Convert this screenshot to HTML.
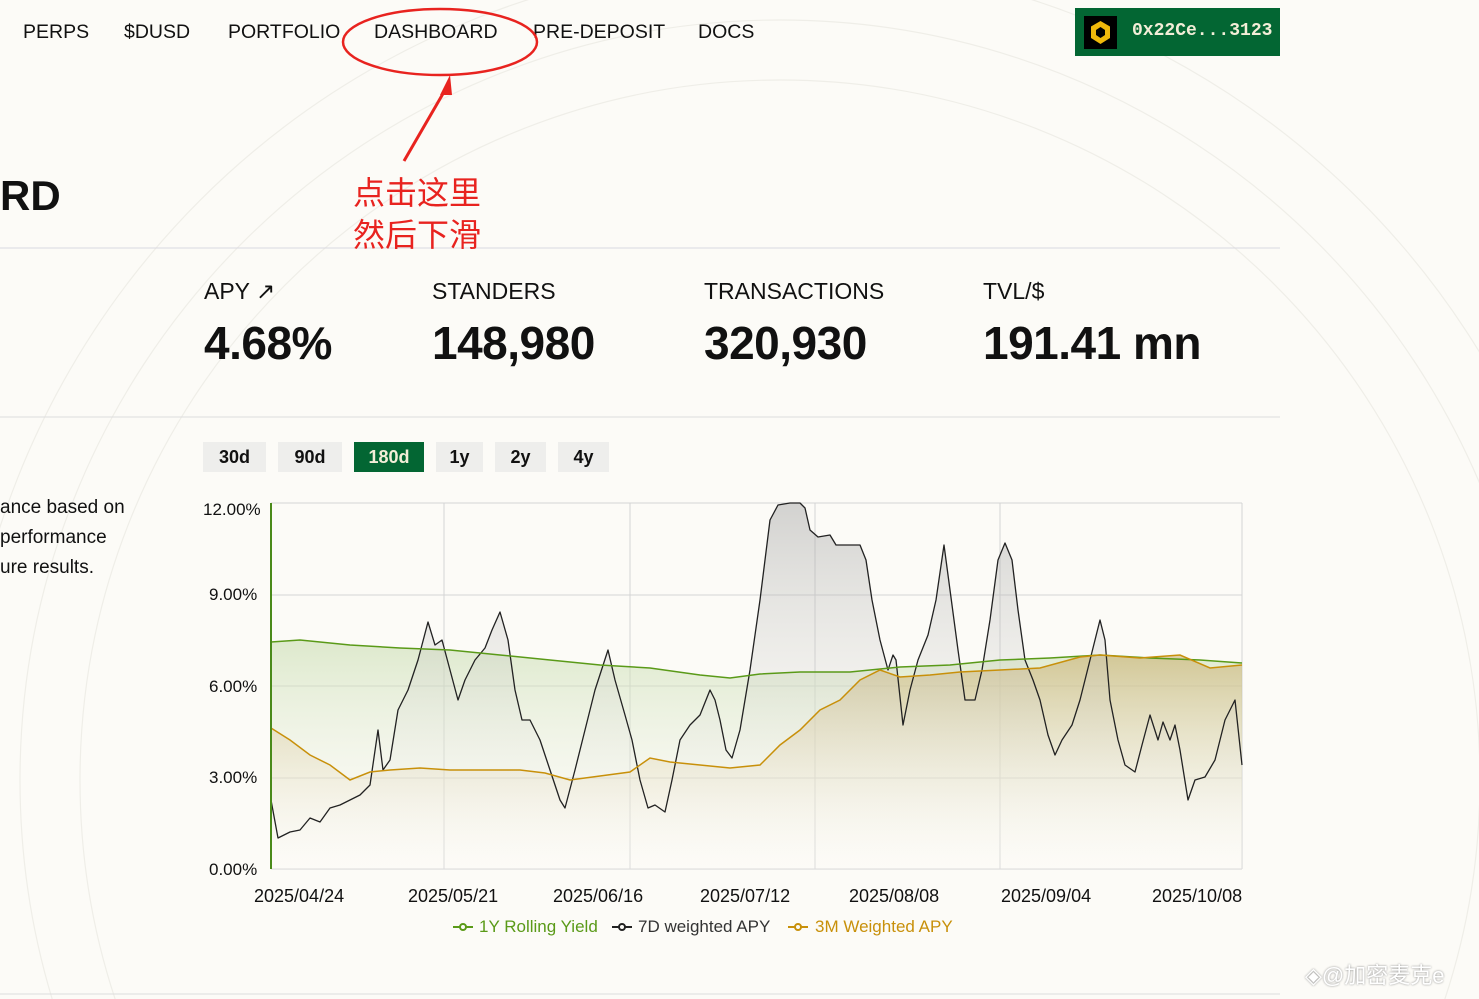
<!DOCTYPE html><html><head><meta charset="utf-8"><style>
html,body{margin:0;width:1479px;height:999px;overflow:hidden}
body{background:#fcfbf7;font-family:"Liberation Sans",sans-serif;position:relative;color:#111}
.a{position:absolute;white-space:nowrap}
.nav{top:21px;font-size:19.5px;color:#111}
.lab{top:278px;font-size:23px}
.val{top:316px;font-size:46px;font-weight:bold;letter-spacing:-0.5px}
.btn{top:442px;height:30px;line-height:30px;text-align:center;background:#eeeeec;font-size:18px;font-weight:bold}
.yl{font-size:17px}
.xl{top:886px;font-size:18px}
.cn{color:#e8231f;font-size:32px;font-family:"Liberation Sans","Noto Sans CJK SC",sans-serif}
</style></head><body>
<svg class="a" style="left:0;top:0" width="1479" height="999"><g fill="none" stroke="#efeee8" stroke-width="1.2">
<circle cx="780" cy="780" r="760"/><circle cx="780" cy="780" r="700"/><circle cx="780" cy="780" r="820"/></g>
<line x1="0" y1="248" x2="1280" y2="248" stroke="#d8d8e0"/><line x1="0" y1="417" x2="1280" y2="417" stroke="#ddd"/><line x1="0" y1="994" x2="1280" y2="994" stroke="#ddd"/></svg>
<div class="a nav" style="left:23px">PERPS</div><div class="a nav" style="left:124px">$DUSD</div><div class="a nav" style="left:228px">PORTFOLIO</div><div class="a nav" style="left:374px">DASHBOARD</div><div class="a nav" style="left:533px">PRE-DEPOSIT</div><div class="a nav" style="left:698px">DOCS</div>
<div class="a" style="left:1075px;top:8px;width:205px;height:48px;background:#036633"><div class="a" style="left:9px;top:8px;width:33px;height:33px;background:#000"><svg width="33" height="33"><polygon points="16.5,5 26,10.5 26,22 16.5,28 7,22 7,10.5" fill="#f0b90b"/><polygon points="16.5,11 21,14 21,19 16.5,22 12,19 12,14" fill="#000"/></svg></div><div class="a" style="left:57px;top:13px;color:#f3eed8;font-family:'Liberation Mono',monospace;font-size:18px;font-weight:bold">0x22Ce...3123</div></div>
<svg class="a" style="left:340px;top:5px" width="210" height="165"><ellipse cx="100" cy="37" rx="97" ry="33" fill="none" stroke="#e8231f" stroke-width="2.5"/><line x1="64" y1="156" x2="108" y2="80" stroke="#e8231f" stroke-width="3"/><polygon points="110,70 100,90 112,90" fill="#e8231f"/></svg>
<div class="a cn" style="left:353px;top:168px">点击这里</div><div class="a cn" style="left:353px;top:210px">然后下滑</div>
<div class="a" style="left:0;top:172px;font-size:42px;font-weight:bold">RD</div>
<div class="a lab" style="left:204px">APY ↗</div><div class="a lab" style="left:432px">STANDERS</div><div class="a lab" style="left:704px">TRANSACTIONS</div><div class="a lab" style="left:983px">TVL/$</div>
<div class="a val" style="left:204px">4.68%</div><div class="a val" style="left:432px">148,980</div><div class="a val" style="left:704px">320,930</div><div class="a val" style="left:983px">191.41 mn</div>
<div class="a btn" style="left:203px;width:63px">30d</div><div class="a btn" style="left:278px;width:64px">90d</div><div class="a btn" style="left:354px;width:70px;background:#036633;color:#f3eed8">180d</div><div class="a btn" style="left:436px;width:47px">1y</div><div class="a btn" style="left:495px;width:51px">2y</div><div class="a btn" style="left:558px;width:51px">4y</div>
<div class="a" style="left:0;top:493px;font-size:19px;line-height:30px">ance based on<br>performance<br>ure results.</div>
<div class="a yl" style="top:500px;left:203px">12.00%</div><div class="a yl" style="top:585px;left:209px">9.00%</div><div class="a yl" style="top:677px;left:209px">6.00%</div><div class="a yl" style="top:768px;left:209px">3.00%</div><div class="a yl" style="top:860px;left:209px">0.00%</div>
<svg class="a" style="left:0;top:0" width="1479" height="999">
<defs><linearGradient id="g" x1="0" y1="0" x2="0" y2="1"><stop offset="0" stop-color="#c9ddb0" stop-opacity=".6"/><stop offset="1" stop-color="#fcfbf7" stop-opacity=".1"/></linearGradient>
<linearGradient id="o" x1="0" y1="0" x2="0" y2="1"><stop offset="0" stop-color="#c9b070" stop-opacity=".6"/><stop offset="1" stop-color="#fcfbf7" stop-opacity=".1"/></linearGradient>
<linearGradient id="k" x1="0" y1="0" x2="0" y2="1"><stop offset="0" stop-color="#a0a0a0" stop-opacity=".45"/><stop offset="1" stop-color="#fcfbf7" stop-opacity="0"/></linearGradient></defs>
<g stroke="#d4d4d4"><line x1="271" y1="503" x2="1242" y2="503"/><line x1="271" y1="595" x2="1242" y2="595"/><line x1="271" y1="686" x2="1242" y2="686"/><line x1="271" y1="778" x2="1242" y2="778"/><line x1="271" y1="869" x2="1242" y2="869"/>
<line x1="444" y1="503" x2="444" y2="869"/><line x1="630" y1="503" x2="630" y2="869"/><line x1="815" y1="503" x2="815" y2="869"/><line x1="1000" y1="503" x2="1000" y2="869"/><line x1="1242" y1="503" x2="1242" y2="869"/></g>
<polygon fill="url(#g)" points="271,869 271,642 300,640 350,645 400,648 450,650 500,655 550,660 600,665 650,668 700,675 730,678 760,674 800,672 850,672 900,667 950,665 1000,660 1050,658 1100,655 1150,658 1200,660 1242,663 1242,869"/>
<polygon fill="url(#o)" points="271,869 271,728 290,740 310,755 330,765 350,780 370,772 390,770 420,768 450,770 480,770 520,770 545,773 570,780 600,776 630,772 650,758 670,762 700,765 730,768 760,765 780,745 800,730 820,710 840,700 860,680 880,670 900,677 930,675 960,672 1000,670 1040,668 1080,657 1100,655 1140,658 1180,655 1210,668 1242,665 1242,869"/>
<polygon fill="url(#k)" points="271,869 271,800 278,838 290,832 300,830 310,818 320,822 330,808 340,805 350,800 360,795 370,785 378,730 383,770 390,760 398,710 408,690 418,660 428,622 435,645 442,640 450,670 458,700 465,680 475,660 485,648 492,630 500,612 508,640 515,690 522,720 530,720 540,740 550,770 560,800 565,808 575,770 585,730 595,690 608,650 615,680 625,715 632,740 640,780 648,808 655,805 665,812 672,780 680,740 690,725 700,715 710,690 715,700 720,720 726,750 732,758 740,730 750,670 760,600 770,520 778,505 790,503 800,503 805,508 810,530 818,537 830,535 836,545 845,545 860,545 866,560 872,600 880,640 888,670 893,655 896,660 903,725 910,690 918,660 928,635 936,600 944,545 950,590 958,650 965,700 975,700 982,670 990,620 998,560 1005,543 1012,560 1018,610 1025,660 1033,680 1040,700 1048,735 1055,755 1062,740 1072,725 1080,700 1090,660 1100,620 1105,640 1110,700 1118,740 1125,765 1135,772 1142,745 1150,715 1158,740 1163,722 1170,740 1175,725 1180,750 1188,800 1195,780 1205,777 1215,760 1225,720 1235,700 1242,765 1242,869"/>
<polyline fill="none" stroke="#222" stroke-width="1.3" stroke-linejoin="round" points="271,800 278,838 290,832 300,830 310,818 320,822 330,808 340,805 350,800 360,795 370,785 378,730 383,770 390,760 398,710 408,690 418,660 428,622 435,645 442,640 450,670 458,700 465,680 475,660 485,648 492,630 500,612 508,640 515,690 522,720 530,720 540,740 550,770 560,800 565,808 575,770 585,730 595,690 608,650 615,680 625,715 632,740 640,780 648,808 655,805 665,812 672,780 680,740 690,725 700,715 710,690 715,700 720,720 726,750 732,758 740,730 750,670 760,600 770,520 778,505 790,503 800,503 805,508 810,530 818,537 830,535 836,545 845,545 860,545 866,560 872,600 880,640 888,670 893,655 896,660 903,725 910,690 918,660 928,635 936,600 944,545 950,590 958,650 965,700 975,700 982,670 990,620 998,560 1005,543 1012,560 1018,610 1025,660 1033,680 1040,700 1048,735 1055,755 1062,740 1072,725 1080,700 1090,660 1100,620 1105,640 1110,700 1118,740 1125,765 1135,772 1142,745 1150,715 1158,740 1163,722 1170,740 1175,725 1180,750 1188,800 1195,780 1205,777 1215,760 1225,720 1235,700 1242,765"/>
<polyline fill="none" stroke="#5a9a18" stroke-width="1.5" points="271,642 300,640 350,645 400,648 450,650 500,655 550,660 600,665 650,668 700,675 730,678 760,674 800,672 850,672 900,667 950,665 1000,660 1050,658 1100,655 1150,658 1200,660 1242,663"/>
<polyline fill="none" stroke="#c8900a" stroke-width="1.5" points="271,728 290,740 310,755 330,765 350,780 370,772 390,770 420,768 450,770 480,770 520,770 545,773 570,780 600,776 630,772 650,758 670,762 700,765 730,768 760,765 780,745 800,730 820,710 840,700 860,680 880,670 900,677 930,675 960,672 1000,670 1040,668 1080,657 1100,655 1140,658 1180,655 1210,668 1242,665"/>
<line x1="271" y1="503" x2="271" y2="869" stroke="#4a8a1a" stroke-width="2"/>
<g stroke-width="2" fill="#fcfbf7"><line x1="453" y1="927" x2="473" y2="927" stroke="#5a9a18"/><circle cx="463" cy="927" r="3" stroke="#5a9a18"/><line x1="612" y1="927" x2="632" y2="927" stroke="#222"/><circle cx="622" cy="927" r="3" stroke="#222"/><line x1="788" y1="927" x2="808" y2="927" stroke="#c8900a"/><circle cx="798" cy="927" r="3" stroke="#c8900a"/></g>
</svg>
<div class="a xl" style="left:254px">2025/04/24</div><div class="a xl" style="left:408px">2025/05/21</div><div class="a xl" style="left:553px">2025/06/16</div><div class="a xl" style="left:700px">2025/07/12</div><div class="a xl" style="left:849px">2025/08/08</div><div class="a xl" style="left:1001px">2025/09/04</div><div class="a xl" style="left:1152px">2025/10/08</div>
<div class="a" style="top:917px;left:479px;font-size:17px;color:#5a9a18">1Y Rolling Yield</div><div class="a" style="top:917px;left:638px;font-size:17px;color:#333">7D weighted APY</div><div class="a" style="top:917px;left:815px;font-size:17px;color:#c8900a">3M Weighted APY</div>
<div class="a" style="top:958px;left:1305px;font-size:22px;color:#fff;text-shadow:0 0 2px #888;font-family:'Liberation Sans','Noto Sans CJK SC',sans-serif">◈@加密麦克e</div>
</body></html>
